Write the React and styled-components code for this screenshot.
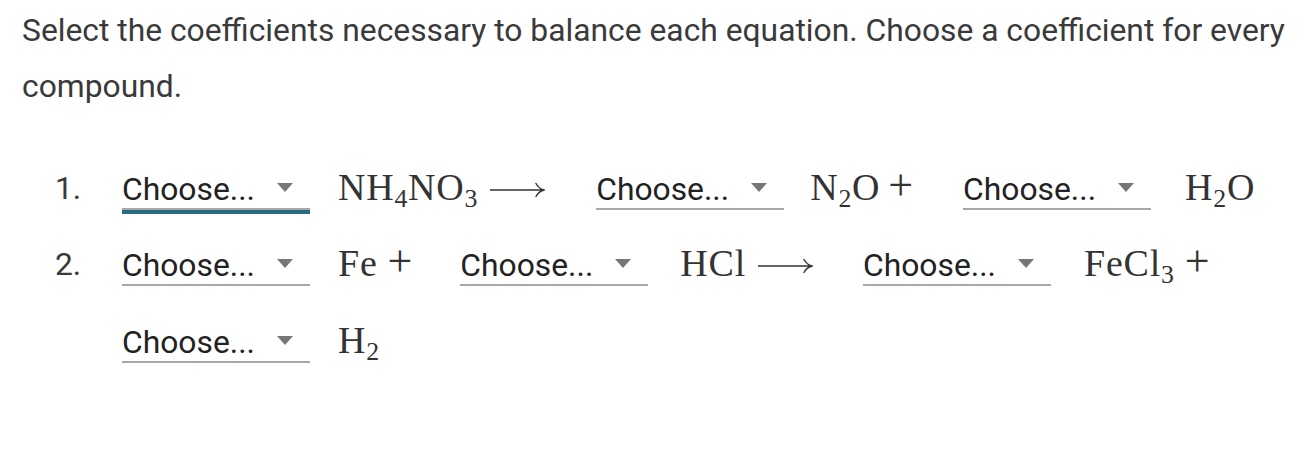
import React from "react";
import styled, { createGlobalStyle } from "styled-components";

const GlobalStyle = createGlobalStyle`
    body {
        margin: 0;
        background: #ffffff;
        font-family: Roboto, "Liberation Sans", Arial, sans-serif;
    }
`;

const Page = styled.div`
    padding: 2px 22px 0 22px;
`;

const Prompt = styled.p`
    margin: 0;
    font-size: 31.8px;
    line-height: 56px;
    color: #3a3a3a;
`;

const List = styled.ol`
    list-style: none;
    margin: 54px 0 0 0;
    padding: 0 0 0 33px;
    display: flex;
    flex-direction: column;
    gap: 34px;
`;

const Item = styled.li`
    display: flex;
    align-items: flex-start;
`;

const Number = styled.span`
    width: 67px;
    flex-shrink: 0;
    font-size: 31.8px;
    line-height: 36px;
    padding-top: 2px;
    color: #3a3a3a;
`;

const Equation = styled.div`
    flex: 1;
    display: flex;
    flex-wrap: wrap;
    align-items: baseline;
    row-gap: 36px;
`;

const SelectBox = styled.button`
    all: unset;
    box-sizing: border-box;
    width: 188px;
    display: flex;
    align-items: flex-start;
    font-family: Roboto, "Liberation Sans", Arial, sans-serif;
    font-size: 31.8px;
    line-height: 36px;
    color: #222;
    padding-bottom: 1px;
    border-bottom: 2px solid #a8a8a8;
    margin-right: ${(p) => p.$after ?? 28}px;
    box-shadow: ${(p) => (p.$active ? "0 4px 0 #2b6c85" : "none")};
    cursor: pointer;
`;

const Caret = styled.span`
    margin: 12px 17px 0 auto;
    width: 0;
    height: 0;
    border-left: 8.5px solid transparent;
    border-right: 8.5px solid transparent;
    border-top: 9px solid #777;
`;

const Chem = styled.span`
    font-family: "Liberation Serif", "Times New Roman", serif;
    font-size: 38px;
    line-height: 36px;
    letter-spacing: 0.02em;
    color: #333;
    margin-right: ${(p) => p.$after ?? 0}px;
    white-space: nowrap;
`;

const Sub = styled.span`
    font-size: 0.68em;
    line-height: 0;
    position: relative;
    top: 0.26em;
`;

const PlusSign = styled.span`
    font-family: "Liberation Serif", "Times New Roman", serif;
    font-size: 44px;
    line-height: 36px;
    color: #333;
    margin-right: ${(p) => p.$after ?? 48}px;
`;

const Plus = ({ after }) => <PlusSign $after={after}>+</PlusSign>;

const ArrowSvg = styled.svg`
    width: 55px;
    height: 20px;
    margin-right: ${(p) => p.$after ?? 53}px;
    flex-shrink: 0;
`;

const Arrow = ({ after }) => (
    <ArrowSvg $after={after} viewBox="0 0 55 20">
        <path
            d="M0 10 H53 M46 3.5 Q48.5 8.5 54 10 Q48.5 11.5 46 16.5"
            fill="none"
            stroke="#333"
            strokeWidth="1.4"
            strokeLinecap="round"
        />
    </ArrowSvg>
);

const Select = ({ active, after }) => (
    <SelectBox type="button" $active={active} $after={after}>
        Choose...
        <Caret />
    </SelectBox>
);

const App = () => {
    return (
        <>
            <GlobalStyle />
            <Page>
                <Prompt>
                    Select the coefficients necessary to balance each equation. Choose a
                    coefficient for every compound.
                </Prompt>
                <List>
                    <Item>
                        <Number>1.</Number>
                        <Equation>
                            <Select active />
                            <Chem $after={12}>
                                NH<Sub>4</Sub>NO<Sub>3</Sub>
                            </Chem>
                            <Arrow after={51} />
                            <Select after={26} />
                            <Chem $after={8}>
                                N<Sub>2</Sub>O
                            </Chem>
                            <Plus after={50} />
                            <Select after={34} />
                            <Chem>
                                H<Sub>2</Sub>O
                            </Chem>
                        </Equation>
                    </Item>
                    <Item>
                        <Number>2.</Number>
                        <Equation>
                            <Select />
                            <Chem $after={10}>Fe</Chem>
                            <Plus />
                            <Select after={32} />
                            <Chem $after={12}>HCl</Chem>
                            <Arrow after={50} />
                            <Select after={33} />
                            <Chem $after={10}>
                                FeCl<Sub>3</Sub>
                            </Chem>
                            <Plus />
                            <Select />
                            <Chem>
                                H<Sub>2</Sub>
                            </Chem>
                        </Equation>
                    </Item>
                </List>
            </Page>
        </>
    );
};

export default App;
